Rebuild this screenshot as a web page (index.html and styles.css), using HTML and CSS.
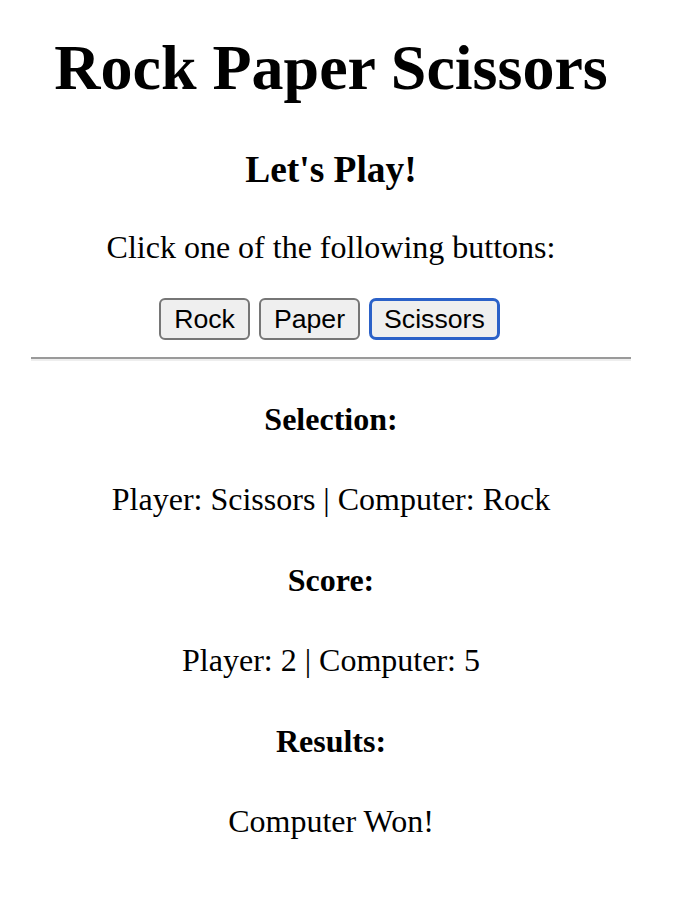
FILE: index.html
```html
<!DOCTYPE html>
<html lang="en">
<head>
<meta charset="utf-8">
<title>Rock Paper Scissors</title>
<link rel="stylesheet" href="styles.css">
</head>
<body>
<div class="page">
  <h1 class="title">Rock Paper Scissors</h1>
  <h3 class="subtitle">Let's Play!</h3>
  <p class="text">Click one of the following buttons:</p>
  <div class="buttons">
    <button class="btn">Rock</button>
    <button class="btn">Paper</button>
    <button class="btn btn-focus">Scissors</button>
  </div>
  <hr class="rule">
  <h4 class="label">Selection:</h4>
  <p class="text">Player: Scissors | Computer: Rock</p>
  <h4 class="label">Score:</h4>
  <p class="text">Player: 2 | Computer: 5</p>
  <h4 class="label">Results:</h4>
  <p class="text">Computer Won!</p>
</div>
</body>
</html>
```

FILE: styles.css
```css
html, body {
  margin: 0;
  padding: 0;
  background: #ffffff;
}

body {
  font-family: "Liberation Serif", "Times New Roman", serif;
  font-size: 32px;
  color: #000000;
}

.page {
  margin-left: 31px;
  width: 600px;
  padding-top: 31px;
  text-align: center;
}

.title {
  font-size: 64px;
  font-weight: bold;
  margin: 0 0 42.88px;
}

.subtitle {
  font-size: 37.44px;
  font-weight: bold;
  margin: 38.5px 0;
}

.text {
  margin: 32px 0;
}

.label {
  font-size: 32px;
  font-weight: bold;
  margin: 43.5px 0;
}

.buttons {
  display: flex;
  justify-content: center;
  gap: 9px;
  margin-top: 31.5px;
  padding-right: 3px;
}

.btn {
  font-family: "Liberation Sans", Arial, sans-serif;
  font-size: 26.67px;
  height: 42px;
  padding: 0 13px;
  background: #efefef;
  color: #000000;
  border: 2px solid #767676;
  border-radius: 6px;
  line-height: 1;
}

.btn-focus {
  border: 3px solid #2b61c8;
  padding: 0 12px;
  border-radius: 7px;
}

.rule {
  margin: 16.5px 0 0;
  border: 0;
  border-top: 2px solid #9a9a9a;
  border-bottom: 2px solid #eeeeee;
  height: 0;
}

.rule + .label {
  margin-top: 40px;
}
```
